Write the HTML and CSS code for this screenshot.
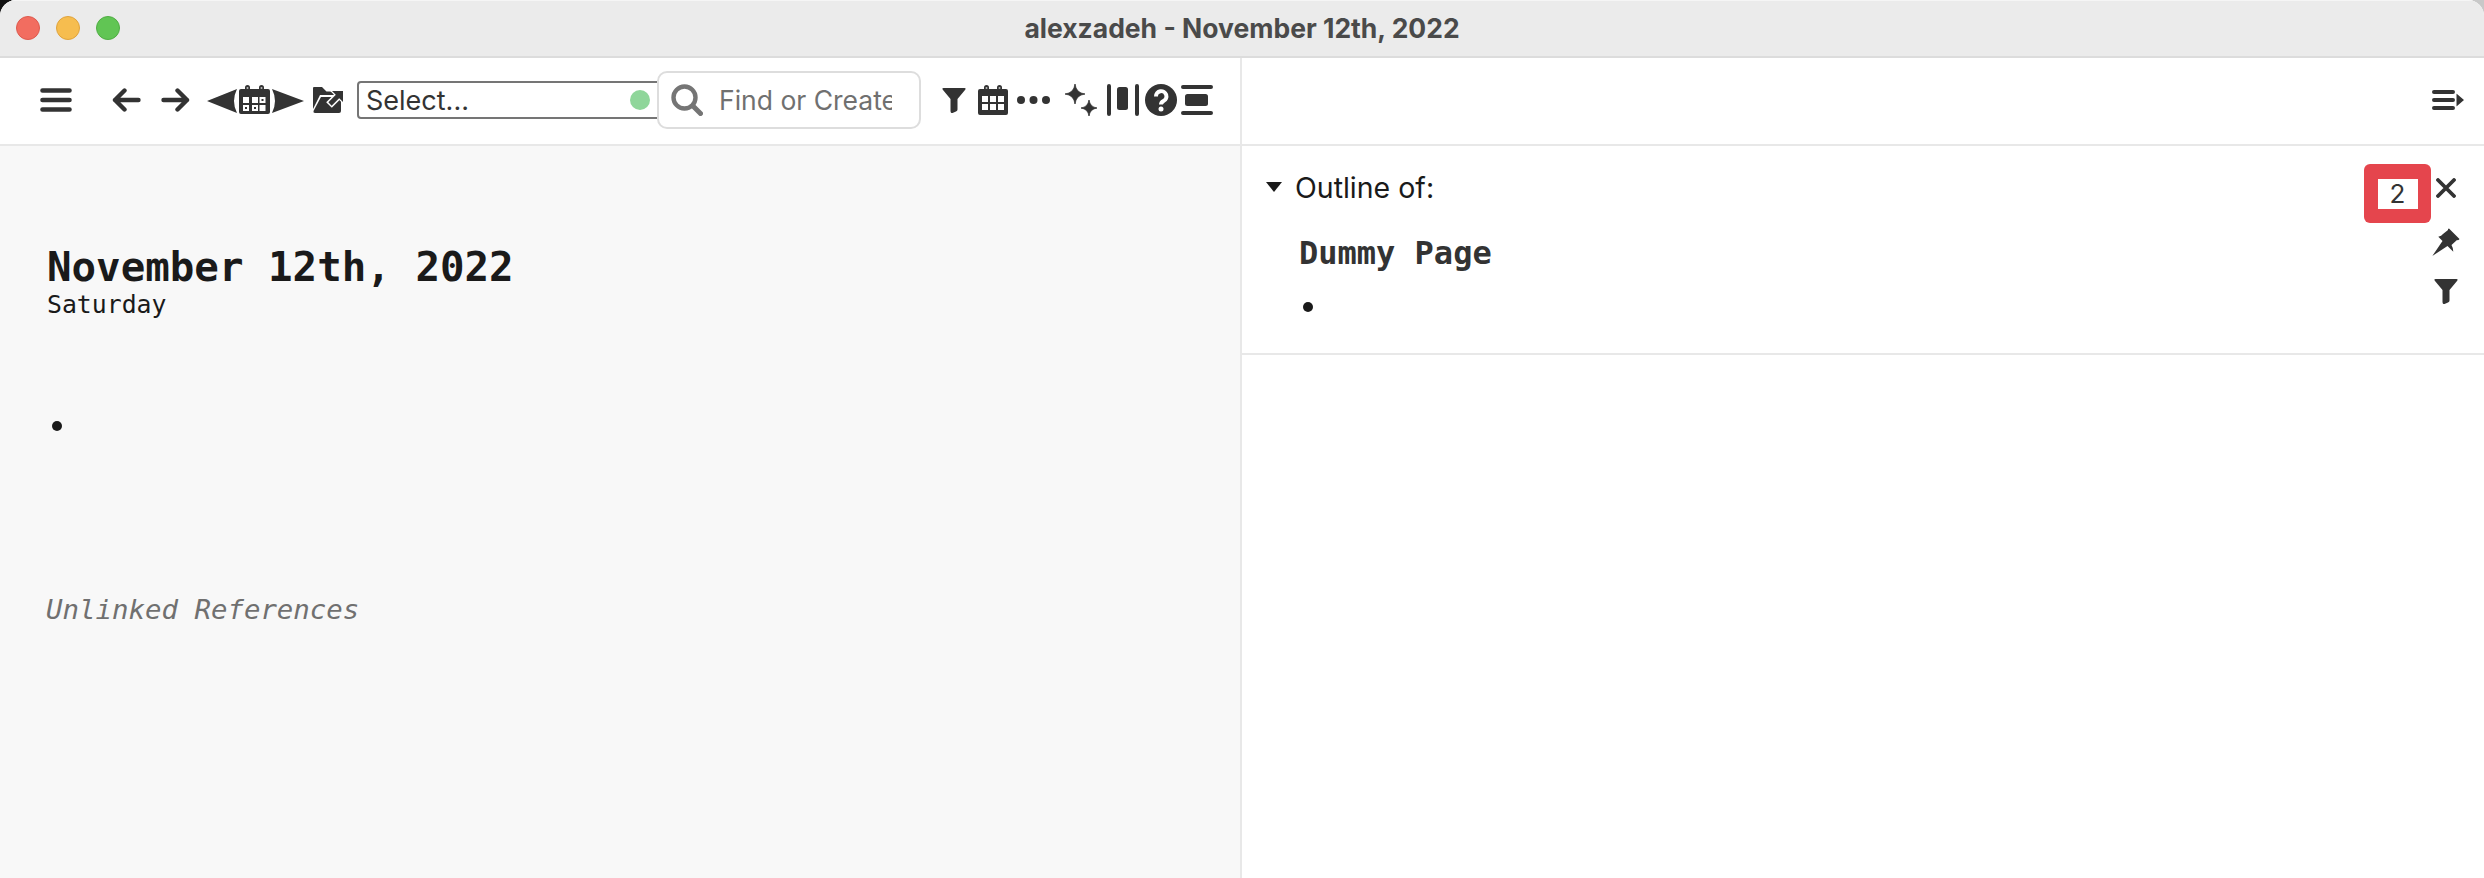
FILE: index.html
```html
<!DOCTYPE html>
<html lang="en">
<head>
    <meta charset="UTF-8">
    <meta name="viewport" content="width=device-width, initial-scale=1.0">
    <title>alexzadeh - November 12th, 2022</title>
    <link rel="stylesheet" href="styles.css">
</head>
<body>
    <div class="window">
        <div class="titlebar">
            <div class="lights">
                <span class="light red"></span>
                <span class="light yellow"></span>
                <span class="light green"></span>
            </div>
            <div class="window-title">alexzadeh - November 12th, 2022</div>
        </div>

        <div class="panes">
            <div class="pane-left">
                <div class="toolbar">
                    <svg class="ico-menu" width="32" height="24" viewBox="0 0 32 24"><path d="M2.500 2.500H29.500M2.500 12H29.500M2.500 21.500H29.500" stroke="#333" stroke-width="4.600" stroke-linecap="round"/></svg>
                    <svg class="ico-back" width="29" height="24" viewBox="0 0 29 24"><path d="M26.500 12H3M12.500 2.500L3 12L12.500 21.500" fill="none" stroke="#333" stroke-width="4.400" stroke-linecap="round" stroke-linejoin="round"/></svg>
                    <svg class="ico-forward" width="29" height="24" viewBox="0 0 29 24"><path d="M2.500 12H26M16.500 2.500L26 12L16.500 21.500" fill="none" stroke="#333" stroke-width="4.400" stroke-linecap="round" stroke-linejoin="round"/></svg>
                    <svg class="ico-date" width="97" height="30" viewBox="0 0 97 30">
                        <path d="M0 16L30 4Q24 16 30 28Z" fill="#333"/>
                        <path d="M97 16L65 4Q71 16 65 28Z" fill="#333"/>
                        <path d="M34 4H38V2.500A2.500 2.500 0 0 1 43 2.500V4H52V2.500A2.500 2.500 0 0 1 57 2.500V4H61Q63 4 63 6V27Q63 29 61 29H34Q32 29 32 27V6Q32 4 34 4Z" fill="#333"/>
                        <circle cx="40.500" cy="3" r="1" fill="#bbb"/>
                        <circle cx="54.500" cy="3" r="1" fill="#bbb"/>
                        <path d="M36 12H42V18H36ZM45 12H51V18H45ZM52.500 12H58.500V18H52.500ZM36 20H42V26H36ZM45 20H51V26H45ZM52.500 20H58.500V26H52.500Z" fill="#fff"/>
                        <path d="M54.500 14H56.500V16H54.500ZM38 22H40V24H38ZM47 22H49V24H47Z" fill="#333"/>
                    </svg>
                    <svg class="ico-folder" width="31" height="26" viewBox="0 0 31 26">
                        <path d="M2 0H10L14.500 4.500H24V8H8L1 22V1Q1 0 2 0Z" fill="#333"/>
                        <path d="M9 10H26L29 13V24Q29 26 27 26H3Q1 26 1.500 24Z" fill="#333"/>
                        <path d="M17 18L26 9" stroke="#fff" stroke-width="8"/>
                        <path d="M20 4H31V15Z" fill="#333" stroke="#fff" stroke-width="2.500" paint-order="stroke"/>
                        <path d="M18 17L26 9" stroke="#333" stroke-width="4.600"/>
                    </svg>
                    <div class="select-box">
                        <span class="select-text">Select...</span>
                        <span class="select-dot"></span>
                    </div>
                    <div class="search-box">
                        <svg width="32" height="32" viewBox="0 0 32 32"><circle cx="13.500" cy="13.500" r="11" fill="none" stroke="#757575" stroke-width="4.400"/><path d="M22 22L29.500 29.500" stroke="#757575" stroke-width="5" stroke-linecap="round"/></svg>
                        <div class="search-text">Find or Create</div>
                    </div>
                    <svg class="ico-filter" width="24" height="25" viewBox="0 0 24 25"><path d="M1.500 0H22.500Q24.500 0 23 2L15.500 11V21.500Q15.500 23 14 23.500L10.500 25Q8.500 25.500 8.500 23V11L1 2Q-0.500 0 1.500 0Z" fill="#333"/></svg>
                    <svg class="ico-cal" width="30" height="30" viewBox="0 0 30 30">
                        <path d="M2 4H6V2.500A2.500 2.500 0 0 1 11 2.500V4H19V2.500A2.500 2.500 0 0 1 24 2.500V4H28Q30 4 30 6V28Q30 30 28 30H2Q0 30 0 28V6Q0 4 2 4Z" fill="#333"/>
                        <circle cx="8.500" cy="3" r="1" fill="#bbb"/>
                        <circle cx="21.500" cy="3" r="1" fill="#bbb"/>
                        <path d="M4 11H10V17H4ZM12 11H18V17H12ZM20 11H26V17H20ZM4 19H10V25H4ZM12 19H18V25H12ZM20 19H26V25H20Z" fill="#fff"/>
                    </svg>
                    <svg class="ico-dots" width="33" height="10" viewBox="0 0 33 10"><circle cx="4" cy="5" r="4" fill="#333"/><circle cx="16.500" cy="5" r="4" fill="#333"/><circle cx="29" cy="5" r="4" fill="#333"/></svg>
                    <svg class="ico-spark" width="32" height="32" viewBox="0 0 32 32"><path d="M10 0Q11 9 20 10Q11 11 10 20Q9 11 0 10Q9 9 10 0ZM24 16Q25 23 32 24Q25 25 24 32Q23 25 16 24Q23 23 24 16Z" fill="#333" stroke="#333" stroke-width="0.800"/></svg>
                    <svg class="ico-cols" width="32" height="32" viewBox="0 0 32 32"><path d="M2 2V30M30 2V30" stroke="#333" stroke-width="4" stroke-linecap="round"/><rect x="10" y="3" width="11" height="23" rx="2.500" fill="#333"/></svg>
                    <svg class="ico-help" width="32" height="32" viewBox="0 0 32 32"><circle cx="16" cy="16" r="16" fill="#333"/><path d="M11 12.500A5.200 5.200 0 1 1 18.500 17Q16 18.500 16 20.500" fill="none" stroke="#fff" stroke-width="4"/><circle cx="16" cy="25" r="2.500" fill="#fff"/></svg>
                    <svg class="ico-align" width="32" height="30" viewBox="0 0 32 30"><path d="M2 2H30M2 28H30" stroke="#333" stroke-width="4" stroke-linecap="round"/><rect x="4" y="9" width="23" height="12" rx="2.500" fill="#333"/></svg>
                </div>

                <div class="journal">
                    <h1 class="journal-date">November 12th, 2022</h1>
                    <div class="journal-day">Saturday</div>
                    <div class="bullet journal-bullet"></div>
                    <div class="unlinked">Unlinked References</div>
                </div>
            </div>

            <div class="pane-right">
                <div class="toolbar toolbar-right">
                    <svg width="32" height="20" viewBox="0 0 32 20"><path d="M2 2H21M2 10H21M2 18H21" stroke="#333" stroke-width="4" stroke-linecap="round"/><path d="M24.500 4Q24.500 3.500 25 4L32 10L25 16Q24.500 16.500 24.500 16Z" fill="#333"/></svg>
                </div>

                <div class="outline">
                    <div class="outline-main">
                        <div class="outline-head">
                            <span class="caret"></span>
                            <span>Outline of:</span>
                        </div>
                        <div class="outline-page">Dummy Page</div>
                        <div class="bullet outline-bullet"></div>
                    </div>
                    <div class="badge"><span class="badge-num">2</span></div>
                    <div class="outline-actions">
                        <svg width="20" height="20" viewBox="0 0 20 20"><path d="M2 2L18 18M18 2L2 18" stroke="#333" stroke-width="3.800" stroke-linecap="round"/></svg>
                        <svg class="act-pin" width="28" height="28" viewBox="0 0 28 28"><path d="M17 0.500L27.500 11Q27 12.500 25 12L19.500 17Q21.500 20.500 21.300 23.700L15.500 18L0.300 28L10.500 13L6.300 8.700Q9.500 8 11 6L16 2Q15.500 0.500 17 0.500Z" fill="#333"/></svg>
                        <svg class="act-filter" width="24" height="25" viewBox="0 0 24 25"><path d="M1.500 0H22.500Q24.500 0 23 2L15.500 11V21.500Q15.500 23 14 23.500L10.500 25Q8.500 25.500 8.500 23V11L1 2Q-0.500 0 1.500 0Z" fill="#333"/></svg>
                    </div>
                </div>
            </div>
        </div>
    </div>
</body>
</html>
```

FILE: styles.css
```css
html, body {
    margin: 0;
    padding: 0;
    height: 100%;
    background: linear-gradient(90deg, #111 0, #111 5%, #c8c8c8 95%, #c8c8c8 100%);
}

body {
    overflow: hidden;
    font-family: "Inter", sans-serif;
    color: #1a1a1a;
}

.window {
    height: 878px;
    background: #fff;
    border-radius: 16px 16px 0 0;
    overflow: hidden;
}

.titlebar {
    box-sizing: border-box;
    height: 58px;
    padding-bottom: 2px;
    background: #ebebeb;
    border-top: 1px solid #f5f5f5;
    border-bottom: 2px solid #dcdcdc;
    display: grid;
    grid-template-columns: 1fr auto 1fr;
    align-items: center;
}

.lights {
    display: flex;
    gap: 16px;
    padding-left: 16px;
}

.light {
    box-sizing: border-box;
    width: 24px;
    height: 24px;
    border-radius: 50%;
}

.red { background: #f26d60; border: 1px solid #dd5a4e; }
.yellow { background: #f6bd4f; border: 1px solid #dfa33d; }
.green { background: #61c554; border: 1px solid #50ad44; }

.window-title {
    font-size: 26.500px;
    line-height: 32px;
    font-weight: 700;
    color: #4a4a4a;
}

.panes {
    display: grid;
    grid-template-columns: 1240px 1fr;
    height: 820px;
}

.pane-left {
    background: #f8f8f8;
}

.pane-right {
    border-left: 2px solid #e8e8e8;
    background: #fff;
}

.toolbar {
    box-sizing: border-box;
    height: 88px;
    background: #fff;
    border-bottom: 2px solid #e8e8e8;
    display: flex;
    align-items: center;
    padding-left: 40px;
    padding-bottom: 2px;
}

.toolbar svg {
    flex: none;
}

.ico-back { margin-left: 40px; }
.ico-forward { margin-left: 20px; }
.ico-date { margin-left: 17px; }
.ico-folder { margin-left: 8px; }
.ico-filter { margin-left: 21px; }
.ico-cal { margin-left: 12px; }
.ico-dots { margin-left: 9px; }
.ico-spark { margin-left: 15px; }
.ico-cols { margin-left: 10px; }
.ico-help { margin-left: 6px; }
.ico-align { margin-left: 4px; }

.select-box {
    box-sizing: border-box;
    flex: none;
    width: 314px;
    height: 38px;
    margin-left: 14px;
    border: 2px solid #757575;
    border-radius: 4px;
    display: flex;
    align-items: center;
    padding-left: 7px;
}

.select-text {
    flex: 1;
    font-size: 27px;
    color: #333;
}

.select-dot {
    width: 20px;
    height: 20px;
    margin-right: 19px;
    border-radius: 50%;
    background: #8fd69a;
}

.search-box {
    box-sizing: border-box;
    flex: none;
    width: 264px;
    height: 58px;
    margin-left: -14px;
    padding-left: 12px;
    background: #fff;
    border: 2px solid #ddd;
    border-radius: 10px;
    display: flex;
    align-items: center;
    position: relative;
}

.search-text {
    width: 173px;
    margin-left: 16px;
    overflow: hidden;
    white-space: nowrap;
    font-size: 26.500px;
    color: #707070;
}

.journal {
    padding-left: 47px;
}

.journal-date {
    margin: 0;
    padding-top: 95px;
    font-family: "DejaVu Sans Mono", monospace;
    font-size: 40.800px;
    line-height: 52px;
    font-weight: bold;
    color: #1a1a1a;
}

.journal-day {
    margin-top: -3px;
    font-family: "DejaVu Sans Mono", monospace;
    font-size: 24.800px;
    line-height: 30px;
    color: #1a1a1a;
}

.bullet {
    width: 10px;
    height: 10px;
    border-radius: 50%;
    background: #1a1a1a;
}

.journal-bullet {
    margin: 101px 0 0 5px;
}

.unlinked {
    margin: 161px 0 0 -1px;
    font-family: "DejaVu Sans Mono", monospace;
    font-size: 27.400px;
    line-height: 36px;
    font-style: italic;
    color: #707070;
}

.toolbar-right {
    justify-content: flex-end;
    padding-right: 20px;
}

.outline {
    box-sizing: border-box;
    height: 209px;
    border-bottom: 2px solid #e8e8e8;
    display: flex;
    padding-right: 24px;
}

.outline-main {
    flex: 1;
    padding: 21px 0 0 24px;
}

.outline-head {
    display: flex;
    align-items: center;
    gap: 13px;
    height: 40px;
    font-size: 28.500px;
    color: #1a1a1a;
}

.caret {
    width: 0;
    height: 0;
    border-left: 8px solid transparent;
    border-right: 8px solid transparent;
    border-top: 10px solid #1a1a1a;
}

.outline-page {
    margin: 27px 0 0 33px;
    font-family: "DejaVu Sans Mono", monospace;
    font-size: 32px;
    line-height: 38px;
    font-weight: bold;
    color: #333;
}

.outline-bullet {
    margin: 30px 0 0 37px;
}

.badge {
    box-sizing: border-box;
    width: 67px;
    height: 59px;
    margin-top: 18px;
    background: #e5454d;
    border-radius: 6px;
    display: flex;
    align-items: center;
    justify-content: center;
}

.badge-num {
    width: 40px;
    height: 30px;
    background: #fff;
    font-size: 26px;
    line-height: 30px;
    text-align: center;
    color: #333;
}

.outline-actions {
    width: 28px;
    margin-left: 1px;
    padding-top: 32px;
    display: flex;
    flex-direction: column;
    align-items: center;
}

.outline-actions svg {
    flex: none;
}

.act-pin {
    margin-top: 30px;
}

.act-filter {
    margin-top: 23px;
}
```
